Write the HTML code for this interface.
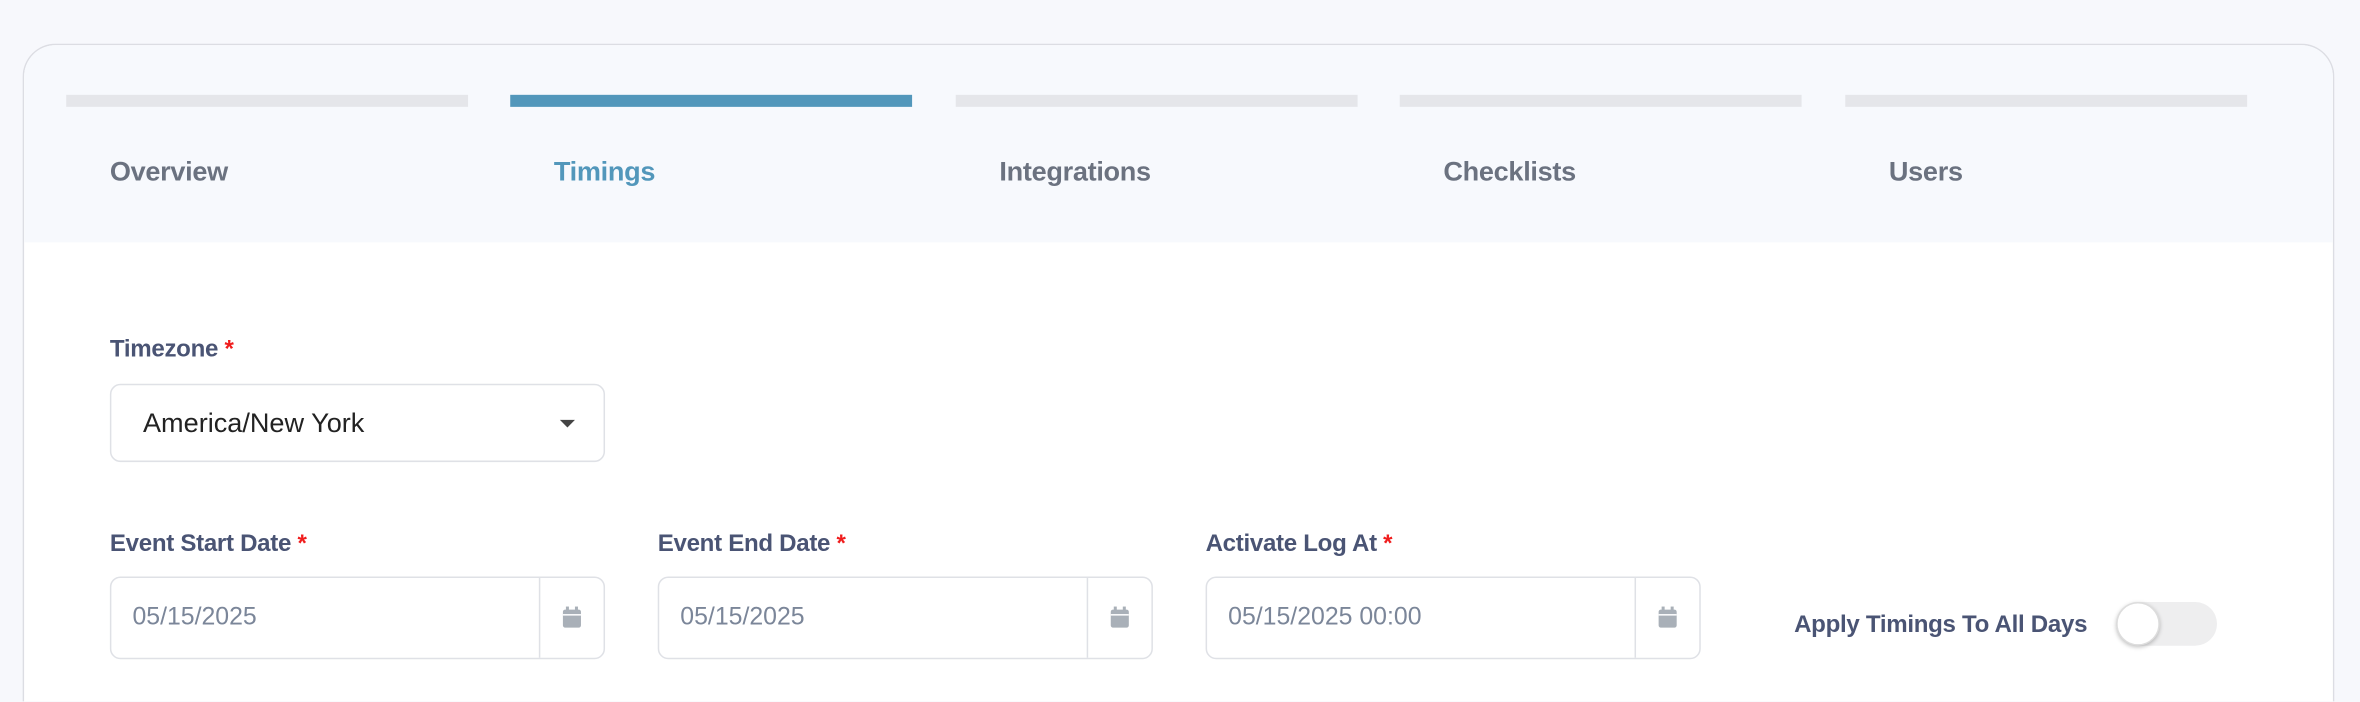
<!DOCTYPE html>
<html><head><meta charset="utf-8"><style>
html,body{margin:0;padding:0;width:2360px;height:702px;overflow:hidden;background:#f7f8fc;}
#s{position:absolute;left:0;top:0;width:1568px;height:466px;overflow:hidden;transform:scale(1.5051);transform-origin:0 0;font-family:"Liberation Sans",sans-serif;}
.card{position:absolute;left:15px;top:29px;width:1534px;height:437px;background:#fff;border:1px solid #dcdde3;border-bottom:none;border-radius:22px 22px 0 0;overflow:hidden;}
.hdr{position:absolute;left:0;top:0;right:0;height:131px;background:#f7f9fd;}
.bar{position:absolute;top:33px;height:8px;width:267px;background:#e5e6ea;}
.tab{position:absolute;top:74px;font-size:18px;font-weight:bold;color:#6b7280;letter-spacing:-0.2px;}
.lbl{position:absolute;font-size:16px;font-weight:bold;color:#4a5474;letter-spacing:-0.2px;}
.lbl b{color:#f01d1d;}
.box{position:absolute;border:1px solid #dfe1e6;border-radius:7px;background:#fff;}
.inp{height:53px;width:327px;top:353px;}
.inp span{position:absolute;left:14px;top:17px;font-size:16.5px;color:#7b8699;}
.inp i{position:absolute;right:42px;top:0;bottom:0;border-left:1px solid #dfe1e6;}
.inp svg{position:absolute;right:14px;top:19px;}
</style></head><body><div id="s">
<div class="card">
 <div class="hdr"></div>
 <div class="bar" style="left:28px"></div>
 <div class="bar" style="left:323px;background:#5297bb"></div>
 <div class="bar" style="left:619px"></div>
 <div class="bar" style="left:914px"></div>
 <div class="bar" style="left:1210px"></div>
 <div class="tab" style="left:57px">Overview</div>
 <div class="tab" style="left:352px;color:#5297bb">Timings</div>
 <div class="tab" style="left:648px">Integrations</div>
 <div class="tab" style="left:943px">Checklists</div>
 <div class="tab" style="left:1239px">Users</div>

 <div class="lbl" style="left:57px;top:194px">Timezone <b>*</b></div>
 <div class="box" style="left:57px;top:225px;width:327px;height:50px;">
  <span style="position:absolute;left:21px;top:15px;font-size:18px;color:#222;">America/New York</span>
  <span style="position:absolute;right:19px;top:23px;width:0;height:0;border-left:5px solid transparent;border-right:5px solid transparent;border-top:5px solid #444;"></span>
 </div>

 <div class="lbl" style="left:57px;top:323px">Event Start Date <b>*</b></div>
 <div class="lbl" style="left:421px;top:323px">Event End Date <b>*</b></div>
 <div class="lbl" style="left:785px;top:323px">Activate Log At <b>*</b></div>

 <div class="box inp" style="left:57px"><span>05/15/2025</span><i></i><svg width="14" height="15" viewBox="0 0 14 15"><rect x="3" y="0" width="2" height="3" fill="#a9b0b8"/><rect x="9" y="0" width="2" height="3" fill="#a9b0b8"/><rect x="1" y="2" width="12" height="12" rx="1.5" fill="#a9b0b8"/><rect x="1" y="5" width="12" height="1" fill="#fff"/></svg></div>
 <div class="box inp" style="left:421px"><span>05/15/2025</span><i></i><svg width="14" height="15" viewBox="0 0 14 15"><rect x="3" y="0" width="2" height="3" fill="#a9b0b8"/><rect x="9" y="0" width="2" height="3" fill="#a9b0b8"/><rect x="1" y="2" width="12" height="12" rx="1.5" fill="#a9b0b8"/><rect x="1" y="5" width="12" height="1" fill="#fff"/></svg></div>
 <div class="box inp" style="left:785px"><span>05/15/2025 00:00</span><i></i><svg width="14" height="15" viewBox="0 0 14 15"><rect x="3" y="0" width="2" height="3" fill="#a9b0b8"/><rect x="9" y="0" width="2" height="3" fill="#a9b0b8"/><rect x="1" y="2" width="12" height="12" rx="1.5" fill="#a9b0b8"/><rect x="1" y="5" width="12" height="1" fill="#fff"/></svg></div>

 <div class="lbl" style="left:1176px;top:377px;font-size:16px;letter-spacing:-0.2px">Apply Timings To All Days</div>
 <div style="position:absolute;left:1390px;top:370px;width:67px;height:29px;border-radius:15px;background:#eeeeef;"></div>
 <div style="position:absolute;left:1390px;top:370px;width:27px;height:27px;border-radius:50%;background:#fff;border:1px solid #ddd;box-shadow:0 1px 3px rgba(0,0,0,.25);"></div>
</div>
</div></body></html>
